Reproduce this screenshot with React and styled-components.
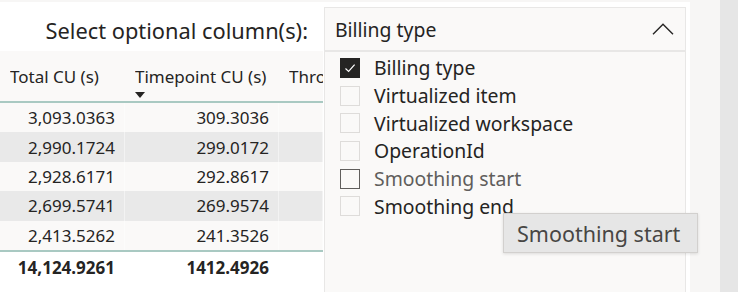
import React from 'react'
import styled, { createGlobalStyle } from 'styled-components'

const GlobalStyle = createGlobalStyle`
  * { box-sizing: border-box; }
  body {
    margin: 0;
    background: #f7f6f5;
    font-family: 'Noto Sans', 'Open Sans', sans-serif;
    color: #252423;
  }
`

// last column is cut by the open dropdown, so it only keeps what shows
const columns = [
  { key: 'total', title: 'Total CU (s)', width: 125 },
  { key: 'timepoint', title: 'Timepoint CU (s)', width: 154, sorted: true },
  { key: 'throttling', title: 'Throttling (s)', width: 44 },
]

const rows = [
  { total: '3,093.0363', timepoint: '309.3036', throttling: '' },
  { total: '2,990.1724', timepoint: '299.0172', throttling: '' },
  { total: '2,928.6171', timepoint: '292.8617', throttling: '' },
  { total: '2,699.5741', timepoint: '269.9574', throttling: '' },
  { total: '2,413.5262', timepoint: '241.3526', throttling: '' },
]

const totals = { total: '14,124.9261', timepoint: '1412.4926', throttling: '' }

const options = [
  { label: 'Billing type', checked: true },
  { label: 'Virtualized item' },
  { label: 'Virtualized workspace' },
  { label: 'OperationId' },
  { label: 'Smoothing start', hovered: true },
  { label: 'Smoothing end' },
]

const App = () => {
  return (
    <Page>
      <GlobalStyle />
      <Canvas>
        <Visual>
          <Toolbar>
            <Title>Select optional column(s):</Title>
            <Combo>
              <span>Billing type</span>
              <svg width='22' height='12' viewBox='0 0 22 12'>
                <path d='M1 11.2 L11 1.2 L21 11.2' fill='none' stroke='#252423' strokeWidth='1.4' />
              </svg>
            </Combo>
          </Toolbar>

          <Table>
            <HeaderRow>
              {columns.map((c) => (
                <HeaderCell key={c.key} $width={c.width}>
                  <HeaderLabel>{c.title}</HeaderLabel>
                  {c.sorted && <SortArrow />}
                </HeaderCell>
              ))}
            </HeaderRow>
            {rows.map((r, i) => (
              <Row key={i} $striped={i % 2 === 1}>
                {columns.map((c) => (
                  <Cell key={c.key} $width={c.width}>
                    {r[c.key]}
                  </Cell>
                ))}
              </Row>
            ))}
            <TotalRow>
              {columns.map((c) => (
                <Cell key={c.key} $width={c.width}>
                  {totals[c.key]}
                </Cell>
              ))}
            </TotalRow>
          </Table>

          <Popup>
            <ListBox>
              {options.map((o) => (
                <Option key={o.label} $hovered={o.hovered}>
                  <CheckBox $checked={o.checked} $hovered={o.hovered}>
                    {o.checked && (
                      <svg width='14' height='14' viewBox='0 0 14 14'>
                        <path d='M2.5 7.5 L5.6 10.4 L11.6 3.6' fill='none' stroke='#fff' strokeWidth='1.2' />
                      </svg>
                    )}
                  </CheckBox>
                  <OptionLabel>{o.label}</OptionLabel>
                </Option>
              ))}
            </ListBox>
          </Popup>
        </Visual>
      </Canvas>
      <ScrollEdge />
      <Tooltip>Smoothing start</Tooltip>
    </Page>
  )
}

export default App

const Page = styled.div`
  position: relative;
  display: flex;
  width: 738px;
  height: 292px;
  overflow: hidden;
  background: #f7f6f5;
`

const Canvas = styled.div`
  flex: 1;
  display: flex;
  padding: 2px 30px 0 0;
`

const ScrollEdge = styled.div`
  width: 18px;
  background: #e6e6e6;
`

const Visual = styled.div`
  position: relative;
  flex: 1;
  display: flex;
  flex-direction: column;
  background: #fff;
  overflow: hidden;
`

const Toolbar = styled.div`
  display: flex;
  align-items: center;
  justify-content: flex-end;
  gap: 16px;
  padding: 5px 4px 0 0;
`

const Title = styled.div`
  font-size: 21.8px;
  line-height: 26px;
  color: #252423;
  padding-top: 3px;
  white-space: nowrap;
`

const Combo = styled.div`
  width: 362px;
  height: 44px;
  display: flex;
  align-items: center;
  justify-content: space-between;
  padding: 0 11px 0 10px;
  background: #faf9f8;
  border: 1px solid #e8e7e6;
  font-size: 19.4px;
  color: #252423;
`

const Table = styled.div`
  display: flex;
  flex-direction: column;
  width: 323px;
  font-size: 17px;
  color: #252423;
`

const HeaderRow = styled.div`
  display: flex;
  height: 52px;
  background: #faf9f8;
  border-bottom: 2px solid #a9c9c2;
`

const HeaderCell = styled.div`
  flex: 0 0 ${(p) => p.$width}px;
  display: flex;
  flex-direction: column;
  padding: 15px 0 0 10px;
  line-height: 22px;
  white-space: nowrap;
  overflow: hidden;
`

const HeaderLabel = styled.span`
  display: block;
  max-width: 100%;
  overflow: hidden;
  text-overflow: clip;
`

const SortArrow = styled.div`
  width: 0;
  height: 0;
  margin-top: 4px;
  border-left: 5px solid transparent;
  border-right: 5px solid transparent;
  border-top: 6px solid #252423;
`

const Row = styled.div`
  display: flex;
  height: 29.4px;
  align-items: center;
  background: ${(p) => (p.$striped ? '#e9e9e9' : '#faf9f8')};
`

const Cell = styled.div`
  flex: 0 0 ${(p) => p.$width}px;
  align-self: stretch;
  display: flex;
  align-items: center;
  justify-content: flex-end;
  padding: 0 9px 0 10px;
  border-right: 1px solid rgba(255, 255, 255, 0.45);
  white-space: nowrap;
  overflow: hidden;
`

const TotalRow = styled.div`
  display: flex;
  height: 34px;
  background: #fff;
  border-top: 2px solid #a9c9c2;
  font-weight: 700;
`

const Popup = styled.div`
  position: absolute;
  left: 323px;
  top: 49px;
  right: 0;
  bottom: 0;
  padding: 0 4px 0 1px;
  background: #fff;
`

const ListBox = styled.div`
  height: 100%;
  padding: 2px 15px 0;
  background: #faf9f8;
  border: 1px solid #e8e7e6;
  border-bottom: none;
`

const Option = styled.div`
  display: flex;
  align-items: center;
  gap: 14px;
  height: 27.7px;
  font-size: 19.4px;
  color: ${(p) => (p.$hovered ? '#605e5c' : '#252423')};
  white-space: nowrap;
`

const OptionLabel = styled.span`
  line-height: 24px;
  padding-top: 1px;
`

const CheckBox = styled.div`
  flex: 0 0 20px;
  height: 20px;
  display: flex;
  align-items: center;
  justify-content: center;
  background: ${(p) => (p.$checked ? '#252423' : '#faf9f8')};
  border: ${(p) =>
    p.$checked ? '1px solid #252423' : p.$hovered ? '1.5px solid #605e5c' : '1px solid #dedcda'};
`

const Tooltip = styled.div`
  position: absolute;
  left: 503px;
  top: 213px;
  width: 195px;
  height: 40px;
  display: flex;
  align-items: center;
  padding: 0 13px;
  background: #e6e6e6;
  border: 1px solid #d2d0ce;
  box-shadow: 0 1px 3px rgba(0, 0, 0, 0.12);
  font-size: 21.5px;
  color: #484644;
  white-space: nowrap;
`
